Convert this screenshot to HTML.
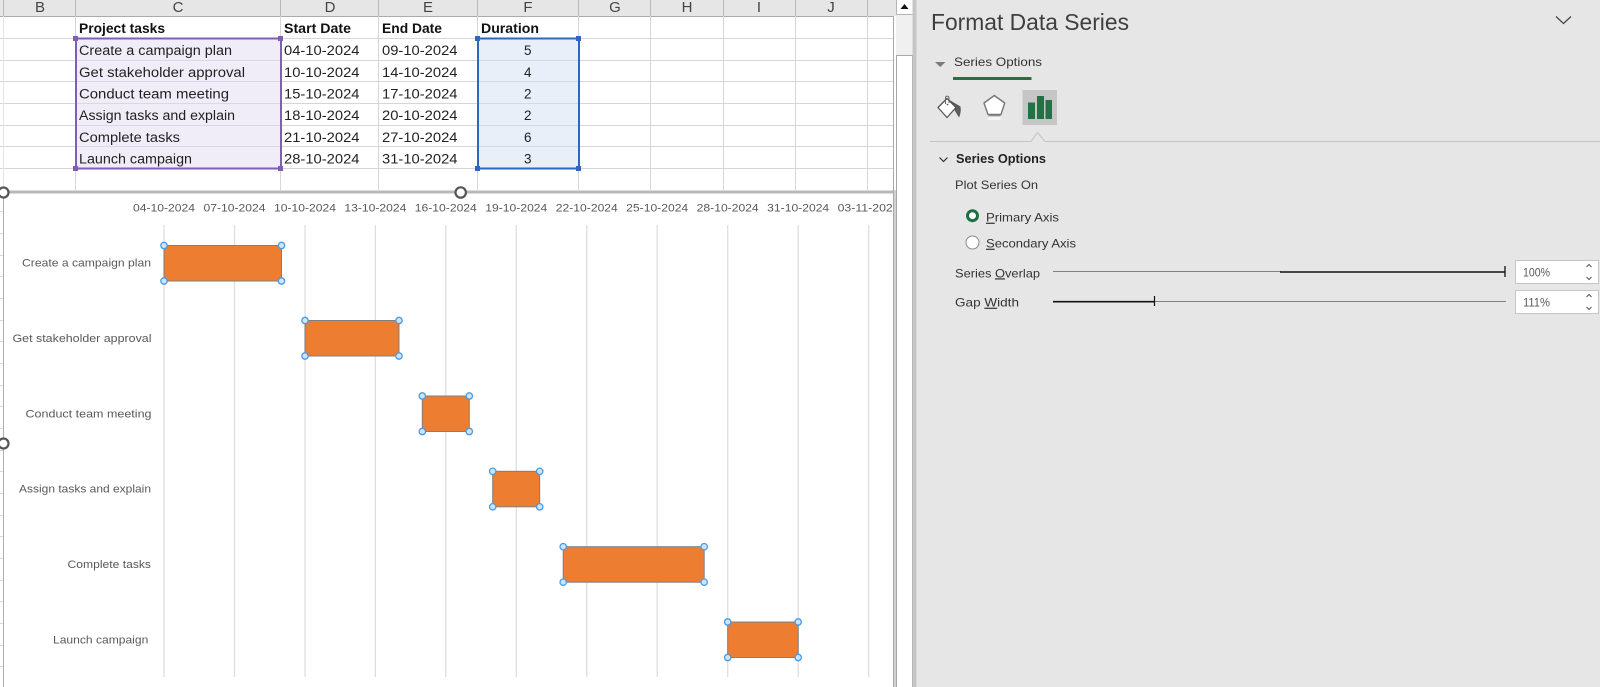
<!DOCTYPE html>
<html><head><meta charset="utf-8"><style>
html,body{margin:0;padding:0;background:#fff;width:1600px;height:687px;overflow:hidden}
svg{display:block}
text{font-family:"Liberation Sans",sans-serif}
.c{font-size:13.5px;fill:#222}
.b{font-size:13.5px;font-weight:bold;fill:#111}
.h{font-size:15px;fill:#444;text-anchor:middle}
.a{font-size:11px;fill:#595959}
.l{font-size:11px;fill:#595959}
.p{font-size:12px;fill:#333}
.u{text-decoration:underline}
</style></head><body>
<svg width="1600" height="687" viewBox="0 0 1600 687" xmlns="http://www.w3.org/2000/svg">
<defs><clipPath id="ch"><rect x="3" y="194" width="890" height="493"/></clipPath></defs>
<rect width="1600" height="687" fill="#fff"/>
<!-- column header -->
<rect x="0" y="0" width="896" height="16" fill="#e6e6e6"/>
<path d="M0 16.5H893" stroke="#ababab" stroke-width="1"/>
<g stroke="#b8b8b8" stroke-width="1"><path d="M3.5 0V16M75.5 0V16M280.5 0V16M378.5 0V16M477.5 0V16M578.5 0V16M650.5 0V16M723.5 0V16M795.5 0V16M867.5 0V16"/></g>
<g>
<text class="h" x="40" y="12">B</text><text class="h" x="178" y="12">C</text><text class="h" x="330" y="12">D</text><text class="h" x="428" y="12">E</text><text class="h" x="528" y="12">F</text><text class="h" x="615" y="12">G</text><text class="h" x="687" y="12">H</text><text class="h" x="759" y="12">I</text><text class="h" x="831" y="12">J</text>
</g>
<!-- gridlines -->
<g stroke="#d6d6d6" stroke-width="1">
<path d="M75.5 16V190M280.5 16V190M378.5 16V190M477.5 16V190M578.5 16V190M650.5 16V190M723.5 16V190M795.5 16V190M867.5 16V190"/>
<path d="M0 38.5H893M0 60.5H893M0 81.5H893M0 103.5H893M0 125.5H893M0 146.5H893M0 168.5H893"/>
<path d="M0 211.5H3M0 233.5H3M0 255.5H3M0 276.5H3M0 298.5H3M0 320.5H3M0 341.5H3M0 363.5H3M0 385.5H3M0 406.5H3M0 428.5H3M0 450.5H3M0 471.5H3M0 493.5H3M0 515.5H3M0 536.5H3M0 558.5H3M0 580.5H3M0 601.5H3M0 623.5H3M0 645.5H3M0 666.5H3"/>
</g>
<path d="M3.5 16V190" stroke="#e6e6e6" stroke-width="1"/>
<!-- selection ranges -->
<rect x="76" y="38" width="205" height="131" fill="#f0edf8"/>
<path d="M77 60.5H280M77 81.5H280M77 103.5H280M77 125.5H280M77 146.5H280" stroke="#dbd8e4" stroke-width="1"/>
<rect x="76" y="38.5" width="205" height="130" fill="none" stroke="#7f5fb5" stroke-width="2"/>
<g fill="#7f5fb5"><rect x="73" y="36" width="5" height="5"/><rect x="278" y="36" width="5" height="5"/><rect x="73" y="166" width="5" height="5"/><rect x="278" y="166" width="5" height="5"/></g>
<rect x="478" y="38" width="101" height="131" fill="#e8eff9"/>
<path d="M479 60.5H578M479 81.5H578M479 103.5H578M479 125.5H578M479 146.5H578" stroke="#d5dae2" stroke-width="1"/>
<rect x="478" y="38.5" width="101" height="130" fill="none" stroke="#2f66c0" stroke-width="2"/>
<g fill="#2f66c0"><rect x="475" y="36" width="5" height="5"/><rect x="576" y="36" width="5" height="5"/><rect x="475" y="166" width="5" height="5"/><rect x="576" y="166" width="5" height="5"/></g>
<!-- table text -->
<text class="b" x="79" y="33" textLength="86" lengthAdjust="spacingAndGlyphs">Project tasks</text>
<text class="b" x="284" y="33" textLength="67" lengthAdjust="spacingAndGlyphs">Start Date</text>
<text class="b" x="382" y="33" textLength="60" lengthAdjust="spacingAndGlyphs">End Date</text>
<text class="b" x="481" y="33" textLength="58" lengthAdjust="spacingAndGlyphs">Duration</text>
<text class="c" x="79" y="55" textLength="153" lengthAdjust="spacingAndGlyphs">Create a campaign plan</text>
<text class="c" x="79" y="77" textLength="166" lengthAdjust="spacingAndGlyphs">Get stakeholder approval</text>
<text class="c" x="79" y="98.5" textLength="150" lengthAdjust="spacingAndGlyphs">Conduct team meeting</text>
<text class="c" x="79" y="120" textLength="156" lengthAdjust="spacingAndGlyphs">Assign tasks and explain</text>
<text class="c" x="79" y="142" textLength="101" lengthAdjust="spacingAndGlyphs">Complete tasks</text>
<text class="c" x="79" y="163.5" textLength="113" lengthAdjust="spacingAndGlyphs">Launch campaign</text>
<g>
<text class="c" x="284" y="55" textLength="75.5" lengthAdjust="spacingAndGlyphs">04-10-2024</text>
<text class="c" x="284" y="77" textLength="75.5" lengthAdjust="spacingAndGlyphs">10-10-2024</text>
<text class="c" x="284" y="98.5" textLength="75.5" lengthAdjust="spacingAndGlyphs">15-10-2024</text>
<text class="c" x="284" y="120" textLength="75.5" lengthAdjust="spacingAndGlyphs">18-10-2024</text>
<text class="c" x="284" y="142" textLength="75.5" lengthAdjust="spacingAndGlyphs">21-10-2024</text>
<text class="c" x="284" y="163.5" textLength="75.5" lengthAdjust="spacingAndGlyphs">28-10-2024</text>
<text class="c" x="382" y="55" textLength="75.5" lengthAdjust="spacingAndGlyphs">09-10-2024</text>
<text class="c" x="382" y="77" textLength="75.5" lengthAdjust="spacingAndGlyphs">14-10-2024</text>
<text class="c" x="382" y="98.5" textLength="75.5" lengthAdjust="spacingAndGlyphs">17-10-2024</text>
<text class="c" x="382" y="120" textLength="75.5" lengthAdjust="spacingAndGlyphs">20-10-2024</text>
<text class="c" x="382" y="142" textLength="75.5" lengthAdjust="spacingAndGlyphs">27-10-2024</text>
<text class="c" x="382" y="163.5" textLength="75.5" lengthAdjust="spacingAndGlyphs">31-10-2024</text>
</g>
<g text-anchor="middle">
<text class="c" x="527.7" y="55">5</text><text class="c" x="527.7" y="77">4</text><text class="c" x="527.7" y="98.5">2</text><text class="c" x="527.7" y="120">2</text><text class="c" x="527.7" y="142">6</text><text class="c" x="527.7" y="163.5">3</text>
</g>
<!-- chart -->
<rect x="3" y="191" width="890" height="496" fill="#fff"/>
<path d="M3.5 192V687" stroke="#b0b0b0" stroke-width="1"/>
<path d="M3 192H893" stroke="#b8b8b8" stroke-width="3"/>
<g stroke="#dedede" stroke-width="1.3">
<path d="M164 225V677M234.5 225V677M305 225V677M375.4 225V677M445.8 225V677M516.3 225V677M586.8 225V677M657.2 225V677M727.7 225V677M798.2 225V677M868.6 225V677"/>
</g>
<g clip-path="url(#ch)">
<text class="a" x="133" y="211.5" textLength="62" lengthAdjust="spacingAndGlyphs">04-10-2024</text>
<text class="a" x="203.5" y="211.5" textLength="62" lengthAdjust="spacingAndGlyphs">07-10-2024</text>
<text class="a" x="274" y="211.5" textLength="62" lengthAdjust="spacingAndGlyphs">10-10-2024</text>
<text class="a" x="344.4" y="211.5" textLength="62" lengthAdjust="spacingAndGlyphs">13-10-2024</text>
<text class="a" x="414.8" y="211.5" textLength="62" lengthAdjust="spacingAndGlyphs">16-10-2024</text>
<text class="a" x="485.3" y="211.5" textLength="62" lengthAdjust="spacingAndGlyphs">19-10-2024</text>
<text class="a" x="555.8" y="211.5" textLength="62" lengthAdjust="spacingAndGlyphs">22-10-2024</text>
<text class="a" x="626.2" y="211.5" textLength="62" lengthAdjust="spacingAndGlyphs">25-10-2024</text>
<text class="a" x="696.7" y="211.5" textLength="62" lengthAdjust="spacingAndGlyphs">28-10-2024</text>
<text class="a" x="767.2" y="211.5" textLength="62" lengthAdjust="spacingAndGlyphs">31-10-2024</text>
<text class="a" x="837.6" y="211.5" textLength="62" lengthAdjust="spacingAndGlyphs">03-11-2024</text>
</g>
<text class="l" x="22" y="266.5" textLength="129" lengthAdjust="spacingAndGlyphs">Create a campaign plan</text>
<text class="l" x="12.5" y="342" textLength="139" lengthAdjust="spacingAndGlyphs">Get stakeholder approval</text>
<text class="l" x="25.5" y="417.3" textLength="126" lengthAdjust="spacingAndGlyphs">Conduct team meeting</text>
<text class="l" x="19" y="492.7" textLength="132" lengthAdjust="spacingAndGlyphs">Assign tasks and explain</text>
<text class="l" x="67.5" y="568" textLength="83.5" lengthAdjust="spacingAndGlyphs">Complete tasks</text>
<text class="l" x="53" y="643.4" textLength="95.3" lengthAdjust="spacingAndGlyphs">Launch campaign</text>
<g fill="#ed7d31" stroke="#7f7f7f" stroke-width="1">
<rect x="164" y="245.5" width="117.5" height="35.5"/>
<rect x="305" y="320.5" width="94" height="35.5"/>
<rect x="422.3" y="396" width="47" height="35.5"/>
<rect x="492.7" y="471.3" width="47" height="35.5"/>
<rect x="563.2" y="546.7" width="141" height="35.5"/>
<rect x="727.7" y="622" width="70.5" height="35.5"/>
</g>
<g fill="#cfe4f8" stroke="#4a9ae2" stroke-width="1.3">
<circle cx="164" cy="245.5" r="3.2"/><circle cx="281.5" cy="245.5" r="3.2"/><circle cx="164" cy="281" r="3.2"/><circle cx="281.5" cy="281" r="3.2"/>
<circle cx="305" cy="320.5" r="3.2"/><circle cx="399" cy="320.5" r="3.2"/><circle cx="305" cy="356" r="3.2"/><circle cx="399" cy="356" r="3.2"/>
<circle cx="422.3" cy="396" r="3.2"/><circle cx="469.3" cy="396" r="3.2"/><circle cx="422.3" cy="431.5" r="3.2"/><circle cx="469.3" cy="431.5" r="3.2"/>
<circle cx="492.7" cy="471.3" r="3.2"/><circle cx="539.7" cy="471.3" r="3.2"/><circle cx="492.7" cy="506.8" r="3.2"/><circle cx="539.7" cy="506.8" r="3.2"/>
<circle cx="563.2" cy="546.7" r="3.2"/><circle cx="704.2" cy="546.7" r="3.2"/><circle cx="563.2" cy="582.2" r="3.2"/><circle cx="704.2" cy="582.2" r="3.2"/>
<circle cx="727.7" cy="622" r="3.2"/><circle cx="798.2" cy="622" r="3.2"/><circle cx="727.7" cy="657.5" r="3.2"/><circle cx="798.2" cy="657.5" r="3.2"/>
</g>
<g fill="#fff" stroke="#555" stroke-width="2.2">
<circle cx="3.5" cy="192.5" r="5"/><circle cx="460.7" cy="192.5" r="5.2"/><circle cx="3.5" cy="443.5" r="5"/>
</g>
<!-- scrollbar -->
<rect x="893" y="16" width="3" height="671" fill="#fff"/>
<path d="M893.5 16V687" stroke="#a9a9a9" stroke-width="1"/>
<path d="M895 190V687" stroke="#c4c4c4" stroke-width="1.5"/>
<rect x="896" y="0" width="17" height="687" fill="#f0f0f0"/>
<rect x="896" y="0" width="17" height="14" fill="#fff"/>
<path d="M896.5 0V14.5H913" fill="none" stroke="#b5b5b5" stroke-width="1"/>
<path d="M900.5 9L904.5 4L908.5 9Z" fill="#111"/>
<rect x="896.5" y="55.5" width="16" height="640" fill="#fff" stroke="#a6a6a6" stroke-width="1"/>
<!-- pane -->
<rect x="912.5" y="0" width="4" height="687" fill="#c6c6c6"/>
<rect x="916.5" y="0" width="684" height="687" fill="#e6e6e6"/>
<text x="931" y="30" font-size="23.5" fill="#3f3f3f" textLength="198" lengthAdjust="spacingAndGlyphs">Format Data Series</text>
<path d="M1556 16.5L1563.5 23.5L1571 16.5" fill="none" stroke="#444" stroke-width="1.2"/>
<path d="M935 62H945.5L940.2 67Z" fill="#7a7a7a"/>
<text class="p" x="954" y="66" textLength="88" lengthAdjust="spacingAndGlyphs">Series Options</text>
<rect x="953" y="77" width="78.5" height="3" fill="#217346"/>
<!-- bucket icon -->
<path d="M947 98.500L960.500 106.500Q961.500 112 959 117.500L955 111Z" fill="#5c5c5c"/>
<path d="M938 107.500L947 98.500L956 107.500L947 117.500Z" fill="#fff" stroke="#555" stroke-width="1.3" stroke-linejoin="round"/>
<path d="M945.500 104V97.500A1.800 1.800 0 0 1 949 97.500V103" fill="none" stroke="#666" stroke-width="1"/>
<circle cx="947.500" cy="104.500" r="0.900" fill="#555"/>
<!-- pentagon icon -->
<path d="M994.300 95.500L1004.700 103L1001 114.500H988L984 103Z" fill="#fff" stroke="#777" stroke-width="1.4" stroke-linejoin="round"/>
<path d="M987.500 120L989 116.500H1000L1001.500 120Z" fill="#f4f4f4"/>
<path d="M988.500 115.500H1000.500" stroke="#8a8a8a" stroke-width="1.6"/>
<!-- chart icon -->
<rect x="1022.500" y="90" width="34.500" height="35" fill="#c6c6c6"/>
<rect x="1028" y="102.500" width="7" height="16.500" fill="#217346"/>
<rect x="1037" y="96" width="7" height="23" fill="#217346"/>
<rect x="1045.500" y="100" width="6.500" height="19" fill="#217346"/>
<path d="M930 141.500H1031L1037.500 132.500L1045 141.500H1600" fill="none" stroke="#c4c4c4" stroke-width="1"/>
<path d="M939.500 157.500L943.500 161.500L947.500 157.500" fill="none" stroke="#333" stroke-width="1.200"/>
<text x="956" y="163" font-size="12.500" font-weight="bold" fill="#222" textLength="90" lengthAdjust="spacingAndGlyphs">Series Options</text>
<text class="p" x="955" y="189" textLength="83" lengthAdjust="spacingAndGlyphs">Plot Series On</text>
<circle cx="972.500" cy="215.700" r="5" fill="#fff" stroke="#1d6f42" stroke-width="3"/>
<text class="p" x="986" y="221.700" textLength="73" lengthAdjust="spacingAndGlyphs"><tspan class="u">P</tspan>rimary Axis</text>
<circle cx="972.500" cy="242.500" r="6.500" fill="#fff" stroke="#8a8a8a" stroke-width="1"/>
<text class="p" x="986" y="247.700" textLength="90" lengthAdjust="spacingAndGlyphs"><tspan class="u">S</tspan>econdary Axis</text>
<text class="p" x="955" y="277.300" textLength="85" lengthAdjust="spacingAndGlyphs">Series <tspan class="u">O</tspan>verlap</text>
<text class="p" x="955" y="306.700" textLength="64" lengthAdjust="spacingAndGlyphs">Gap <tspan class="u">W</tspan>idth</text>
<!-- sliders -->
<path d="M1053 271.500H1281" stroke="#808080" stroke-width="1"/>
<path d="M1280 272H1505" stroke="#111" stroke-width="1.600"/>
<path d="M1505 266V277" stroke="#111" stroke-width="1.300"/>
<path d="M1154 301.500H1506" stroke="#808080" stroke-width="1"/>
<path d="M1053 301.700H1154" stroke="#111" stroke-width="1.600"/>
<path d="M1154.500 296V306" stroke="#111" stroke-width="1.200"/>
<!-- spinners -->
<rect x="1515.500" y="260.500" width="83" height="23" fill="#fff" stroke="#c6c6c6" stroke-width="1"/>
<rect x="1515.500" y="290.500" width="83" height="23" fill="#fff" stroke="#c6c6c6" stroke-width="1"/>
<text x="1523" y="276.500" font-size="12" fill="#595959" textLength="27" lengthAdjust="spacingAndGlyphs">100%</text>
<text x="1523" y="306.500" font-size="12" fill="#595959" textLength="27" lengthAdjust="spacingAndGlyphs">111%</text>
<g fill="none" stroke="#555" stroke-width="1">
<path d="M1586.500 267L1589 264.500L1591.500 267M1586.500 277L1589 279.500L1591.500 277"/>
<path d="M1586.500 297L1589 294.500L1591.500 297M1586.500 307L1589 309.500L1591.500 307"/>
</g>
</svg>
</body></html>
